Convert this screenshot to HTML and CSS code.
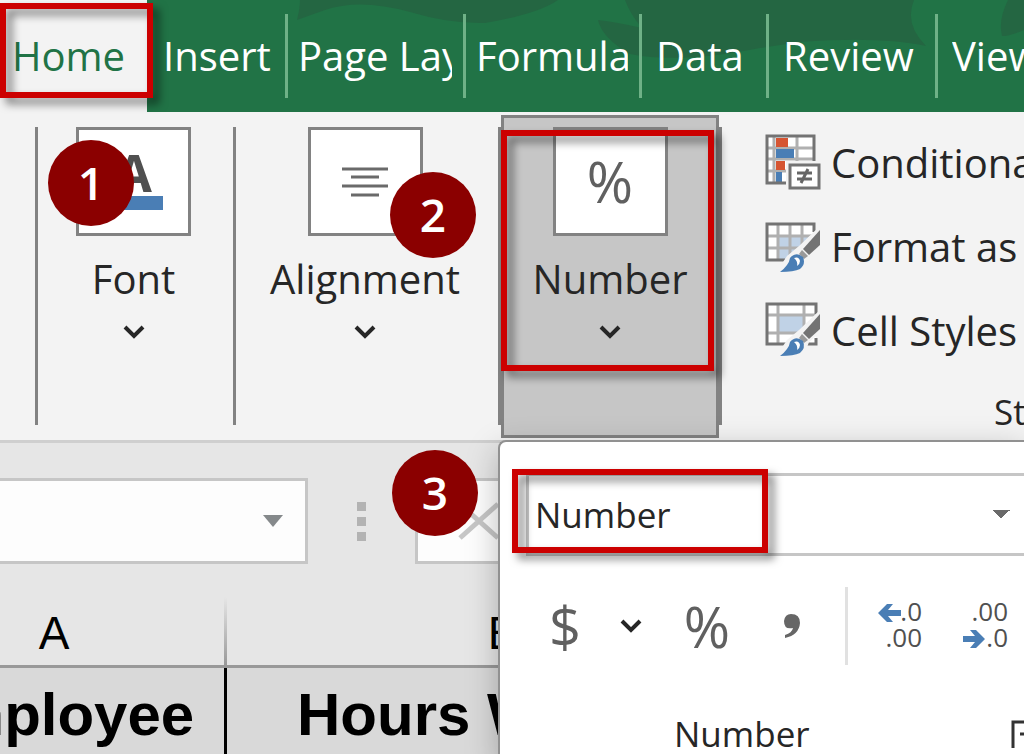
FILE: index.html
```html
<!DOCTYPE html>
<html lang="en">
  <head>
    <meta charset="UTF-8" />
    <meta name="viewport" content="width=device-width, initial-scale=1.0" />
    <title>Excel number format</title>
    <link rel="stylesheet" href="styles.css">
  </head>

  <body>
    <div class="app">
      <nav class="tabs">
        <svg class="tabs-art" viewBox="0 0 744 60" aria-hidden="true">
          <path d="M17 20 Q20 8 20 0 H278 Q258 14 205 23 Q170 24 130 12 Q80 -2 45 10 Q28 16 17 20 Z" />
          <path d="M345 0 H634 Q624 24 646 46 Q600 36 520 42 L480 48 Q400 64 350 54 Q322 38 318 20 Q336 22 362 28 Q350 14 345 0 Z" />
          <path d="M728 0 H744 V30 Q730 36 722 36 Q718 20 728 0 Z" />
        </svg>
        <button class="tab tab-home active"><span>Home</span></button>
        <button class="tab tab-insert"><span>Insert</span></button>
        <button class="tab tab-layout"><span>Page Lay</span></button>
        <button class="tab tab-formulas"><span>Formula</span></button>
        <button class="tab tab-data"><span>Data</span></button>
        <button class="tab tab-review"><span>Review</span></button>
        <button class="tab tab-view"><span>View</span></button>
      </nav>

      <section class="ribbon">
        <div class="divider divider-first"></div>
        <button class="group group-font">
          <span class="group-icon">
            <svg width="60" height="60" viewBox="0 0 60 60">
              <text class="icon-letter" x="30" y="40" text-anchor="middle">A</text>
              <rect x="1" y="44" width="58" height="14" fill="#4a7eb5" />
            </svg>
          </span>
          <span class="group-name">Font</span>
          <svg class="chevron" width="22" height="14" viewBox="0 0 22 14"><path d="M2 2 L11 11 L20 2" /></svg>
        </button>
        <div class="divider"></div>
        <button class="group group-alignment">
          <span class="group-icon">
            <svg width="48" height="30" viewBox="0 0 48 30">
              <path d="M1 2 H47 M10 10 H38 M1 19 H47 M10 28 H38" stroke="#6a6a6a" stroke-width="3" />
            </svg>
          </span>
          <span class="group-name">Alignment</span>
          <svg class="chevron" width="22" height="14" viewBox="0 0 22 14"><path d="M2 2 L11 11 L20 2" /></svg>
        </button>
        <div class="divider"></div>
        <button class="group group-number open">
          <span class="group-icon">%</span>
          <span class="group-name">Number</span>
          <svg class="chevron" width="22" height="14" viewBox="0 0 22 14"><path d="M2 2 L11 11 L20 2" /></svg>
        </button>
        <div class="divider"></div>

        <div class="styles">
          <button class="style-row">
            <svg width="56" height="56" viewBox="0 0 56 56">
              <rect x="1" y="2" width="48" height="47" fill="#fff" />
              <path d="M9 2 V49 M32 2 V30 M1 14 H49 M1 25 H49 M1 37 H24" stroke="#b0b0b0" stroke-width="3" />
              <rect x="11" y="4" width="12" height="9" fill="#d65532" />
              <rect x="11" y="15" width="18" height="9" fill="#4a7eb5" />
              <rect x="11" y="27" width="9" height="9" fill="#d65532" />
              <rect x="11" y="38" width="6" height="10" fill="#4a7eb5" />
              <path d="M21 49 H2 V2 H49 V27" fill="none" stroke="#737373" stroke-width="3" />
              <rect x="21" y="27" width="35" height="29" fill="#f3f3f3" />
              <rect x="25" y="31" width="29" height="23" fill="#fff" stroke="#737373" stroke-width="3" />
              <path d="M32 39 H47 M32 45 H47 M43 35 L36 49" stroke="#666" stroke-width="3" />
            </svg>
            <span>Conditional</span>
          </button>
          <button class="style-row">
            <svg width="56" height="56" viewBox="0 0 56 56">
              <rect x="2" y="6" width="47" height="36" fill="#fff" />
              <path d="M14 19 H49 V42 H14 Z" fill="#c0d2e6" />
              <path d="M13 6 V42 M25 6 V42 M37 6 V42 M2 18 H49 M2 30 H49" stroke="#b0b0b0" stroke-width="3" />
              <path d="M49 14 V6 H2 V42 H20" fill="none" stroke="#737373" stroke-width="3" />
              <path class="brush-gap" d="M56 7 L34 28 L22 38 L14 50 L20 56 H40 L56 36 Z" />
              <path d="M55 12 V27 L44 37 L38 31 Z" fill="#737373" />
              <path d="M37 32 L43 38 L39 41 L34 36 Z" fill="#999" />
              <path d="M15 54 Q24 47 25 40 Q31 33 38 39 Q41 46 35 51 Q29 54 15 54 Z" fill="#4a7eb5" />
              <path d="M29 40 Q34 38 35 43 Q35 46 32 48 Q33 43 29 40 Z" fill="#fff" />
            </svg>
            <span>Format as</span>
          </button>
          <button class="style-row">
            <svg width="56" height="56" viewBox="0 0 56 56">
              <rect x="2" y="2" width="49" height="40" fill="#fff" />
              <rect x="14" y="14" width="24" height="16" fill="#c0d2e6" />
              <path d="M13 2 V42 M39 2 V42 M2 13 H51 M2 31 H51" stroke="#b0b0b0" stroke-width="3" />
              <path d="M51 12 V2 H2 V42 H51 V36" fill="none" stroke="#737373" stroke-width="3" />
              <path class="brush-gap" d="M56 7 L34 28 L22 38 L14 50 L20 56 H38 L44 40 L56 30 Z" />
              <path d="M55 12 V27 L44 37 L38 31 Z" fill="#737373" />
              <path d="M37 32 L43 38 L39 41 L34 36 Z" fill="#999" />
              <path d="M15 54 Q24 47 25 40 Q31 33 38 39 Q41 46 35 51 Q29 54 15 54 Z" fill="#4a7eb5" />
              <path d="M29 40 Q34 38 35 43 Q35 46 32 48 Q33 43 29 40 Z" fill="#fff" />
            </svg>
            <span>Cell Styles</span>
          </button>
          <div class="styles-name">Styles</div>
        </div>
      </section>

      <main class="sheet">
        <div class="formula-bar">
          <div class="name-box">
            <input type="text" aria-label="Name box" />
            <button aria-label="Open name list">
              <svg width="20" height="12" viewBox="0 0 20 12"><path d="M0 0 H20 L10 12 Z" fill="#85898b" /></svg>
            </button>
          </div>
          <div class="dots"><i></i><i></i><i></i></div>
          <div class="formula-box">
            <button aria-label="Cancel">
              <svg width="42" height="38" viewBox="0 0 42 38"><path d="M2 36 L40 2 M2 2 L40 36" stroke="#c6c6c6" stroke-width="5" /></svg>
            </button>
          </div>
        </div>

        <table class="grid">
          <thead>
            <tr>
              <th class="col-a">A</th>
              <th class="col-b">B</th>
              <th></th>
            </tr>
          </thead>
          <tbody>
            <tr>
              <td>Employee</td>
              <td>Hours Worked</td>
              <td></td>
            </tr>
          </tbody>
        </table>

        <!-- Number drop-down panel -->
        <div class="panel">
          <select class="format" aria-label="Number format">
            <option>Number</option>
          </select>
          <div class="tools">
            <button class="tool tool-currency" aria-label="Accounting format">$</button>
            <button class="tool tool-more" aria-label="More currencies">
              <svg class="chevron" width="22" height="14" viewBox="0 0 22 14"><path d="M2 2 L11 11 L20 2" /></svg>
            </button>
            <button class="tool tool-percent" aria-label="Percent style">%</button>
            <button class="tool tool-comma" aria-label="Comma style">
              <svg width="18" height="26" viewBox="0 0 18 26">
                <path d="M8 1 Q17 1 17 10 Q16 22 2 25 V22 Q9 20 10 15 Q1 17 1 8 Q2 1 8 1 Z" fill="#666" />
              </svg>
            </button>
            <div class="tool-line"></div>
            <button class="tool tool-increase" aria-label="Increase decimal">
              <svg width="48" height="52" viewBox="0 0 48 52">
                <path d="M0 13 L9 4 H15 L10 10 H23 V16 H10 L15 22 H9 Z" fill="#4a7eb5" />
                <text x="44" y="21" text-anchor="end">.0</text>
                <text x="44" y="47" text-anchor="end">.00</text>
              </svg>
            </button>
            <button class="tool" aria-label="Decrease decimal">
              <svg width="48" height="52" viewBox="0 0 48 52">
                <path d="M23 39 L14 30 H8 L13 36 H1 V42 H13 L8 48 H14 Z" fill="#4a7eb5" />
                <text x="46" y="21" text-anchor="end">.00</text>
                <text x="46" y="47" text-anchor="end">.0</text>
              </svg>
            </button>
          </div>
          <div class="panel-footer">
            <span>Number</span>
            <button aria-label="Number format settings">
              <svg width="28" height="28" viewBox="0 0 28 28">
                <path d="M2 28 V2 H22 M9 14 H20 M20 14 V24" fill="none" stroke="#333" stroke-width="3" />
              </svg>
            </button>
          </div>
        </div>
      </main>

      <!-- Step markers over the window -->
      <div class="frame frame-home"></div>
      <div class="frame frame-number"></div>
      <div class="frame frame-format"></div>
      <div class="step step-1">1</div>
      <div class="step step-2">2</div>
      <div class="step step-3">3</div>
    </div>
  </body>
</html>
```

FILE: styles.css
```css
* {
  box-sizing: border-box;
}

body {
  margin: 0;
  font-family: "Open Sans", "Noto Sans", sans-serif;
  font-size: 40px;
  color: #262626;
  background-color: #e6e6e6;
}

button,
input,
select {
  font: inherit;
  color: inherit;
  background: none;
  border: none;
  border-radius: 0;
  margin: 0;
  padding: 0;
}

svg {
  display: block;
  flex-shrink: 0;
}

.app {
  position: relative;
  display: flex;
  flex-direction: column;
  min-height: 100vh;
  overflow: hidden;
}

/* Tabs */
.tabs {
  position: relative;
  display: flex;
  height: 112px;
  background-color: #217346;
  overflow: hidden;
}

.tabs-art {
  position: absolute;
  top: 0;
  right: 0;
  width: 744px;
  fill: #246642;
}

.tab {
  position: relative;
  flex-shrink: 0;
  padding: 0 12px 0 16px;
  color: #fff;
  line-height: 112px;
  text-align: left;
}

.tab span {
  display: block;
  overflow: hidden;
  white-space: nowrap;
}

.tab + .tab + .tab::before {
  content: "";
  position: absolute;
  left: -1px;
  top: 14px;
  bottom: 14px;
  width: 3px;
  background-color: #6fb187;
}

.tab.active {
  color: #217346;
  background-color: #f3f3f3;
}

.tab-home {
  width: 147px;
  padding-left: 12px;
}

.tab-insert {
  width: 139px;
}

.tab-layout {
  width: 178px;
  padding-left: 12px;
}

.tab-formulas {
  width: 176px;
  padding-left: 12px;
}

.tab-data {
  width: 127px;
}

.tab-review {
  width: 169px;
}

.tab-view {
  flex: 1 0 88px;
  padding-right: 0;
}

/* Ribbon */
.ribbon {
  display: flex;
  height: 328px;
  background-color: #f3f3f3;
  overflow: hidden;
}

.divider {
  flex-shrink: 0;
  width: 3px;
  height: 298px;
  margin-top: 15px;
  background-color: #828282;
}

.divider-first {
  margin-left: 35px;
}

.group {
  display: flex;
  flex-direction: column;
  align-items: center;
  flex-shrink: 0;
  padding: 12px 4px 0 0;
  margin: 3px 0 2px;
}

.group-font {
  width: 195px;
}

.group-alignment {
  width: 262px;
}

.group-number {
  width: 218px;
}

.group.open {
  padding: 9px 0 0;
  background-color: #c6c6c6;
  border: 3px solid #828282;
}

.group-icon {
  display: flex;
  justify-content: center;
  align-items: center;
  width: 115px;
  height: 109px;
  background-color: #fff;
  border: 3px solid #828282;
  color: #606060;
  font-size: 56px;
  line-height: 103px;
}

.icon-letter {
  font-size: 52px;
  font-weight: bold;
  fill: #505050;
}

.group-name {
  margin-top: 15px;
  line-height: 56px;
}

.chevron {
  margin-top: 18px;
  fill: none;
  stroke: #262626;
  stroke-width: 4px;
}

.styles {
  flex: 1;
  min-width: 0;
  padding: 8px 0 0 43px;
}

.style-row {
  display: flex;
  align-items: center;
  gap: 10px;
  height: 84px;
  white-space: nowrap;
}

.brush-gap {
  fill: #f3f3f3;
}

.styles-name {
  padding-left: 229px;
  font-size: 35px;
  line-height: 80px;
}

/* Formula bar and cells */
.sheet {
  position: relative;
  flex: 1;
  border-top: 3px solid #cfcfcf;
}

.formula-bar {
  display: flex;
  align-items: center;
  height: 86px;
  margin-top: 35px;
}

.name-box {
  display: flex;
  align-items: center;
  width: 308px;
  height: 86px;
  padding-right: 22px;
  background-color: #fdfdfd;
  border: 3px solid #c6c6c6;
  border-left: none;
}

.name-box input {
  flex: 1;
  min-width: 0;
}

.dots {
  display: flex;
  flex-direction: column;
  gap: 6px;
  margin: 0 49px;
}

.dots i {
  width: 9px;
  height: 9px;
  background-color: #b3b3b3;
}

.formula-box {
  display: flex;
  align-items: center;
  flex: 1;
  height: 86px;
  padding-left: 40px;
  background-color: #fdfdfd;
  border: 3px solid #c6c6c6;
}

.grid {
  width: calc(100% + 119px);
  margin-left: -119px;
  table-layout: fixed;
  border-collapse: separate;
  border-spacing: 0;
}

.grid th,
.grid td {
  padding: 0;
  text-align: center;
  white-space: nowrap;
}

.grid th {
  height: 104px;
  padding-top: 36px;
  background: linear-gradient(#e6e6e6, #999) right bottom / 3px 68px no-repeat;
  border-bottom: 3px solid #999;
  font-family: "Liberation Sans", Arial, sans-serif;
  font-size: 46px;
  font-weight: normal;
  line-height: 64px;
  color: #000;
}

.grid td {
  height: 92px;
  background-color: #d9d9d9;
  border-right: 3px solid #000;
  font-family: "Liberation Sans", Arial, sans-serif;
  font-size: 60px;
  font-weight: bold;
  color: #000;
}

.col-a {
  width: 346px;
}

.col-b {
  width: 552px;
}

/* Number panel */
.panel {
  position: absolute;
  top: -3px;
  left: 498px;
  right: 0;
  bottom: 0;
  padding: 31px 0 0 26px;
  background-color: #fff;
  border: 2px solid #919191;
  border-width: 2px 0 0 2px;
  border-radius: 8px 0 0 0;
  box-shadow: 0 10px 32px rgba(0, 0, 0, 0.25);
  overflow: hidden;
}

.format {
  display: block;
  width: 100%;
  height: 83px;
  padding-left: 6px;
  appearance: none;
  background: conic-gradient(from -45deg at 50% 100%, #6a6a6a 90deg, transparent 0) right 14px center / 18px 9px no-repeat;
  border: 3px solid #c6c6c6;
  border-right: none;
  font-size: 35px;
}

.tools {
  display: flex;
  align-items: center;
  height: 78px;
  margin-top: 31px;
  color: #606060;
}

.tool {
  flex-shrink: 0;
  font-size: 56px;
  line-height: 72px;
}

.tool .chevron {
  margin: 0;
}

.tool text {
  font-size: 26px;
  fill: #505050;
}

.tool-currency {
  width: 32px;
  margin-left: 23px;
}

.tool-more {
  margin-left: 39px;
}

.tool-percent {
  width: 48px;
  margin-left: 41px;
}

.tool-comma {
  margin-left: 52px;
}

.tool-line {
  width: 3px;
  height: 78px;
  margin: 0 30px 0 44px;
  background-color: #e1e1e1;
}

.tool-increase {
  margin-right: 36px;
}

.panel-footer {
  display: flex;
  align-items: center;
  justify-content: space-between;
  margin-top: 47px;
  padding-left: 148px;
  font-size: 35px;
  line-height: 44px;
}

.panel-footer button {
  width: 13px;
  overflow: hidden;
}

/* Step markers */
.frame {
  position: absolute;
  border: 6px solid #c00;
  filter: drop-shadow(6px 6px 4px rgba(0, 0, 0, 0.5));
  pointer-events: none;
}

.frame-home {
  left: 0;
  top: 3px;
  width: 153px;
  height: 95px;
}

.frame-number {
  left: 501px;
  top: 130px;
  width: 213px;
  height: 241px;
}

.frame-format {
  left: 512px;
  top: 469px;
  width: 256px;
  height: 84px;
}

.step {
  position: absolute;
  width: 86px;
  height: 86px;
  border-radius: 50%;
  background-color: #8b0000;
  color: #fff;
  font-size: 46px;
  font-weight: 600;
  line-height: 84px;
  text-align: center;
}

.step-1 {
  left: 48px;
  top: 140px;
}

.step-2 {
  left: 390px;
  top: 172px;
}

.step-3 {
  left: 392px;
  top: 450px;
}
```
